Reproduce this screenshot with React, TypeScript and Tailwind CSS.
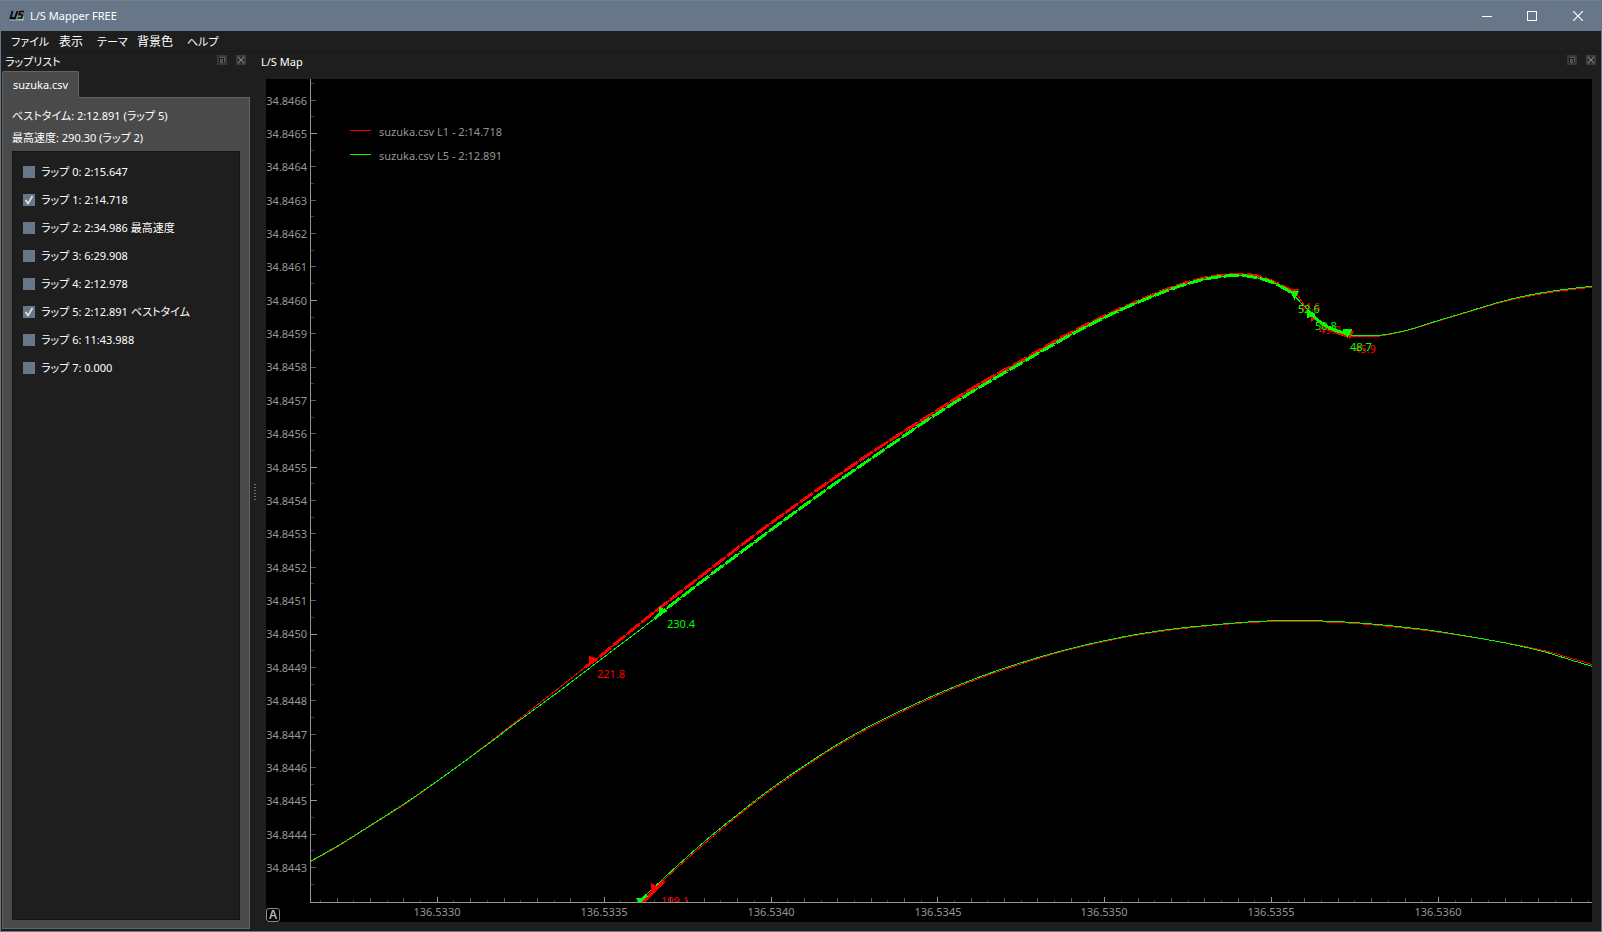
import { useState } from 'react';

type Point = [number, number];

const menuItems = [
  { label: 'ファイル', className: 'w-12 text-[11px]' },
  { label: '表示', className: 'w-[38px] text-[12px]' },
  { label: 'テーマ', className: 'w-10 text-[11px]' },
  { label: '背景色', className: 'w-[50px] text-[12px]' },
  { label: 'ヘルプ', className: 'w-12 text-[11px]' },
];

const laps = [
  { id: 0, time: '2:15.647', note: '' },
  { id: 1, time: '2:14.718', note: '' },
  { id: 2, time: '2:34.986', note: '最高速度' },
  { id: 3, time: '6:29.908', note: '' },
  { id: 4, time: '2:12.978', note: '' },
  { id: 5, time: '2:12.891', note: 'ベストタイム' },
  { id: 6, time: '11:43.988', note: '' },
  { id: 7, time: '0.000', note: '' },
];

const RED = '#ff0000';
const GREEN = '#00ff00';

// plot geometry
const AXIS_X = 310.5;
const AXIS_Y = 902.5;
const RIGHT = 1592;
const STEP = 16.685;

const redEntry: Point[] = [
  [310, 862], [337, 847], [360, 832.5], [405, 804], [438, 780.7], [480, 749.5],
  [520, 718.5], [557, 689.5], [585, 667.3],
];
const redBraking: Point[] = [
  [585, 667.3], [600, 656.3], [626.7, 634.3], [660, 607.7], [709, 570], [753, 536.3],
  [797, 504.3], [841, 473.3], [885, 443.7], [930, 415], [975, 386.7], [1022.5, 360],
  [1069.5, 333.3], [1117.6, 310], [1166.8, 289.3], [1200, 279], [1218.6, 275.7],
  [1235, 274.6], [1253.3, 275.2], [1270.7, 280.7], [1288, 288.7], [1296, 292.5],
];
const redExit: Point[] = [
  [1296, 292.5], [1304, 305], [1313, 316], [1320, 322], [1333, 331], [1347, 336.3],
  [1362, 336.8], [1378, 336.3], [1406.7, 330.7], [1436.7, 321.5], [1466.7, 312.5],
  [1500, 302.7], [1528, 296.3], [1560, 291], [1592, 287.3],
];

const greenEntry: Point[] = [
  [310, 861.5], [337, 846.3], [360, 832], [405, 803.3], [438, 780.5], [480, 750],
  [520, 720], [561.7, 689.3], [610, 652.5], [654.3, 619],
];
const greenBraking: Point[] = [
  [654.3, 619], [667.4, 608], [709, 576], [753, 543.3], [797, 510.7], [841, 479.3],
  [885, 449], [930, 418.3], [975, 390], [1022.5, 362.3], [1069.5, 335.5], [1117.6, 311.3],
  [1166.8, 290.7], [1200, 280.3], [1220, 276.7], [1238, 275.4], [1253.3, 277],
  [1270.7, 281.7], [1286.7, 289.7], [1294, 295],
];
const greenExit: Point[] = [
  [1294, 295], [1302, 304], [1310, 312], [1318, 320], [1333, 328.7], [1347, 334],
  [1356, 335.5], [1378, 335.5], [1406.7, 330.3], [1436.7, 321], [1466.7, 312],
  [1500, 302], [1528, 295.3], [1560, 290], [1592, 286.3],
];

const greenReturn: Point[] = [
  [637, 903], [656.6, 885], [677, 866], [706.6, 839.7], [737, 815], [771, 788.7],
  [808, 763.3], [837, 744.7], [871, 725.5], [917.4, 703], [962, 683.7], [1010, 666.3],
  [1065, 650], [1121, 637.3], [1172.7, 629], [1220, 624.3], [1260, 621.3], [1300, 620.5],
  [1335, 621.5], [1369, 623.7], [1430, 630.3], [1491, 640.3], [1520, 646], [1546.7, 652.5],
  [1570, 659.7], [1592, 666.3],
];
const redReturn: Point[] = [
  [640, 904], [658, 885.7], [678, 867], [707, 841.5], [737, 816.5], [771, 790.3],
  [808, 764.8], [837, 746], [871, 727], [917.4, 704.5], [962, 685], [1010, 667.5],
  [1065, 650.8], [1121, 638], [1172.7, 629.8], [1220, 624.8], [1260, 622], [1300, 621.5],
  [1335, 622.3], [1369, 624.5], [1430, 631], [1491, 640.3], [1520, 645.5], [1546.7, 651.3],
  [1570, 658], [1592, 664.5],
];

// Catmull-Rom through the GPS points
function smooth(points: Point[]) {
  let d = `M${points[0][0]} ${points[0][1]}`;
  for (let i = 0; i < points.length - 1; i++) {
    const p0 = points[i - 1] ?? points[i];
    const p1 = points[i];
    const p2 = points[i + 1];
    const p3 = points[i + 2] ?? p2;
    const c1 = [p1[0] + (p2[0] - p0[0]) / 6, p1[1] + (p2[1] - p0[1]) / 6];
    const c2 = [p2[0] - (p3[0] - p1[0]) / 6, p2[1] - (p3[1] - p1[1]) / 6];
    d += `C${c1[0]} ${c1[1]} ${c2[0]} ${c2[1]} ${p2[0]} ${p2[1]}`;
  }
  return d;
}

function Trace({ points, color, braking }: { points: Point[]; color: string; braking?: boolean }) {
  const d = smooth(points);
  return (
    <g fill="none" stroke={color} shapeRendering="crispEdges">
      <path d={d} />
      {braking && <path d={d} strokeWidth={3} strokeDasharray="15 3.1" />}
    </g>
  );
}

function SpeedLabel({ x, y, color, children }: { x: number; y: number; color: string; children: string }) {
  return (
    <text x={x} y={y} fill={color}>
      {children}
    </text>
  );
}

function tickStyle(k: number) {
  if (k % 10 === 0) return { length: 6, stroke: '#969696' };
  if (k % 2 === 0) return { length: 5, stroke: '#5a5a5a' };
  return { length: 3, stroke: '#3c3c3c' };
}

function Axes() {
  const yTicks = Array.from({ length: 49 }, (_, i) => i - 3);
  const xTicks = Array.from({ length: 77 }, (_, i) => i - 7);
  return (
    <g>
      <g shapeRendering="crispEdges">
        {yTicks.map((k) => {
          const y = 133.5 + k * STEP;
          const { length, stroke } = tickStyle(k);
          return y < AXIS_Y - 5 ? (
            <path key={k} d={`M${AXIS_X} ${Math.floor(y) + 0.5}h${length}`} stroke={stroke} />
          ) : null;
        })}
        {xTicks.map((k) => {
          const x = Math.floor(437.3 + k * STEP) + 0.5;
          const { length, stroke } = tickStyle(k);
          return <path key={k} d={`M${x} ${AXIS_Y}v${-length}`} stroke={stroke} />;
        })}
        <path d={`M${AXIS_X} 79V${AXIS_Y}H${RIGHT}`} fill="none" stroke="#969696" />
      </g>
      <g fill="#969696">
        {Array.from({ length: 24 }, (_, i) => (
          <text key={i} x={307} y={Math.round(104.5 + i * STEP * 2)} textAnchor="end">
            {(34.8466 - i * 0.0001).toFixed(4)}
          </text>
        ))}
        {Array.from({ length: 7 }, (_, i) => (
          <text key={i} x={Math.round(437 + i * STEP * 10)} y={916} textAnchor="middle">
            {(136.533 + i * 0.0005).toFixed(4)}
          </text>
        ))}
      </g>
    </g>
  );
}

function LapMap() {
  return (
    <svg
      viewBox="266 79 1326 843"
      className="block size-full font-['Noto_Sans'] text-[11px]"
      role="img"
      aria-label="L/S Map"
    >
      <defs>
        <clipPath id="plot">
          <rect x={310} y={79} width={1282} height={823} />
        </clipPath>
      </defs>
      <Axes />
      <g clipPath="url(#plot)">
        <Trace points={redEntry} color={RED} />
        <Trace points={redBraking} color={RED} braking />
        <Trace points={redExit} color={RED} />
        <Trace points={redReturn} color={RED} />

        <Trace points={greenEntry} color={GREEN} />
        <Trace points={greenReturn} color={GREEN} />
        <g fill={RED} shapeRendering="crispEdges">
          <path d="M589 655.500l9 4-9 5zM1289 289h10l-5 8zM1311 314l6 4-6 4zM1345 331h9l-4 8.500zM651 883l9.500 4.500-9.500 5z" />
          <path d="M1314 317Q1328 331 1347 336M664 881L642 903" fill="none" stroke={RED} strokeWidth={3} />
        </g>
        <SpeedLabel x={597} y={678} color={RED}>221.8</SpeedLabel>
        <SpeedLabel x={1298} y={311} color={RED}>44.6</SpeedLabel>
        <SpeedLabel x={1319} y={334} color={RED}>49.2</SpeedLabel>
        <SpeedLabel x={1354} y={353} color={RED}>45.9</SpeedLabel>
        <SpeedLabel x={661} y={905} color={RED}>199.1</SpeedLabel>

        <Trace points={greenBraking} color={GREEN} braking />
        <Trace points={greenExit} color={GREEN} />
        <g fill={GREEN} shapeRendering="crispEdges">
          <path d="M659 606.500l9 4.500-9 4.500zM1290 291h9l-4.500 9zM1307 309l9 5-9 4.500zM1342.500 329h10l-5 9zM635 897.500h9l-4.500 5z" />
          <path d="M1311 314Q1325 329 1346 333.500M647 895L637 904" fill="none" stroke={GREEN} strokeWidth={3} />
        </g>
        <SpeedLabel x={667} y={628} color={GREEN}>230.4</SpeedLabel>
        <SpeedLabel x={1298} y={313} color={GREEN}>52.6</SpeedLabel>
        <SpeedLabel x={1315} y={330} color={GREEN}>50.8</SpeedLabel>
        <SpeedLabel x={1350} y={351} color={GREEN}>48.7</SpeedLabel>
      </g>
      <g shapeRendering="crispEdges">
        <path d="M350 130.500h21" stroke={RED} />
        <path d="M350 154.500h21" stroke={GREEN} />
      </g>
      <g fill="#969696">
        <text x={379} y={136}>suzuka.csv L1 - 2:14.718</text>
        <text x={379} y={160}>suzuka.csv L5 - 2:12.891</text>
      </g>
    </svg>
  );
}

function AppLogo() {
  return (
    <svg width="16" height="12" viewBox="0 0 16 12" aria-hidden="true">
      <path d="M8 6h7v5H7z" fill="#7fa08c" />
      <path d="M3.500 1L1.500 8H5.500M8.500 1L5.500 9" stroke="#0a0a0a" strokeWidth="1.800" fill="none" />
      <path d="M15 1.500h-4l-1 3h3.500l-1 3.500H8.500" stroke="#0a0a0a" strokeWidth="1.600" fill="none" />
      <path d="M0 10.500h7" stroke="#8a96a5" />
      <path d="M9.500 9.500h5" stroke="#a8c4b0" />
      <path d="M13 4.500h1.500" stroke="#b04040" />
    </svg>
  );
}

function TitleBar() {
  return (
    <header className="flex h-[31px] shrink-0 items-center border-t border-[#73828f] bg-[#68768a] pl-[8px]">
      <AppLogo />
      <h1 className="ml-[5px] flex-1">L/S Mapper FREE</h1>
      <button className="grid h-full w-[45px] place-items-center" aria-label="最小化">
        <svg width="10" height="10" stroke="#fff" shapeRendering="crispEdges">
          <path d="M0 5.500h10" />
        </svg>
      </button>
      <button className="grid h-full w-[45px] place-items-center" aria-label="最大化">
        <svg width="10" height="10" stroke="#fff" fill="none" shapeRendering="crispEdges">
          <path d="M.5.5h9v9h-9z" />
        </svg>
      </button>
      <button className="grid h-full w-[47px] place-items-center" aria-label="閉じる">
        <svg width="10" height="10" stroke="#fff" strokeWidth="1.200">
          <path d="M0 0l10 10M10 0L0 10" />
        </svg>
      </button>
    </header>
  );
}

function DockHeader({ title, className }: { title: string; className: string }) {
  return (
    <div className={`flex shrink-0 ${className}`}>
      <h2 className="flex-1 leading-[20px]">{title}</h2>
      <div className="flex gap-[9px] pt-[3px]">
        <button className="size-[10px]" aria-label="フロート">
          <svg width="10" height="10" fill="none" shapeRendering="crispEdges">
            <rect width="10" height="10" rx="1" fill="#383838" />
            <path d="M2.500 3.500h4v4h-4z" stroke="#181818" />
            <path d="M3 2.500h4.500V7M3.500 7V4.500h2V7z" stroke="#5e5e5e" />
          </svg>
        </button>
        <button className="size-[10px]" aria-label="パネルを閉じる">
          <svg width="10" height="10">
            <rect width="10" height="10" rx="1" fill="#3c3c3c" />
            <rect x="2" y="2" width="6" height="6" fill="#222" />
            <path d="M2 2l6 6M8 2L2 8" stroke="#7a7a7a" strokeWidth="1.300" />
          </svg>
        </button>
      </div>
    </div>
  );
}

function LapList() {
  const [checked, setChecked] = useState<number[]>([1, 5]);
  const toggle = (id: number) =>
    setChecked((prev) => (prev.includes(id) ? prev.filter((x) => x !== id) : [...prev, id]));

  return (
    <ul className="flex-1 border border-[#141414] bg-[#1e1e1e] pt-[6px] pl-[10px]">
      {laps.map((lap) => (
        <li key={lap.id} className="h-7">
          <label className="flex h-full items-center gap-[6px]">
            <span className="grid size-3">
              <input
                type="checkbox"
                checked={checked.includes(lap.id)}
                onChange={() => toggle(lap.id)}
                className="peer col-start-1 row-start-1 size-3 appearance-none bg-[#68768a]"
              />
              <svg
                viewBox="0 0 12 12"
                className="pointer-events-none invisible col-start-1 row-start-1 size-3 peer-checked:visible"
              >
                <path d="M2.500 6l2.500 3.500L9.500 2" fill="none" stroke="#e4e4e4" strokeWidth="1.600" />
              </svg>
            </span>
            <span>
              ラップ {lap.id}: {lap.time} {lap.note}
            </span>
          </label>
        </li>
      ))}
    </ul>
  );
}

function LapPanel() {
  return (
    <aside className="flex w-[249px] shrink-0 flex-col pl-px">
      <DockHeader title="ラップリスト" className="h-[19px] pr-1 pl-[3px]" />
      <div role="tablist" className="flex">
        <button
          role="tab"
          aria-selected="true"
          className="relative z-10 -mb-px h-[27px] rounded-t-[2px] border border-b-0 border-[#646464] bg-[#4a4a4a] px-[10px]"
        >
          suzuka.csv
        </button>
      </div>
      <div
        role="tabpanel"
        className="flex flex-1 flex-col border border-[#646464] bg-[#4a4a4a] px-[9px] pt-[7px] pb-[8px]"
      >
        <p className="leading-[22px]">ベストタイム: 2:12.891 (ラップ 5)</p>
        <p className="mb-[2px] leading-[22px]">最高速度: 290.30 (ラップ 2)</p>
        <LapList />
      </div>
    </aside>
  );
}

function Splitter() {
  return (
    <div role="separator" className="grid w-[10px] shrink-0 place-items-center pt-[5px]">
      <svg width="2" height="18" shapeRendering="crispEdges">
        <path d="M1 0v18" stroke="#707070" strokeWidth="2" strokeDasharray="1 2" />
      </svg>
    </div>
  );
}

function MapPanel() {
  return (
    <main className="flex min-w-0 flex-1 flex-col">
      <DockHeader title="L/S Map" className="h-[27px] pr-[5px] pl-px" />
      <div className="relative mr-[9px] mb-[7px] ml-[6px] min-h-0 flex-1 bg-black">
        <LapMap />
        <button className="absolute bottom-0 left-0 grid size-[14px] place-items-center rounded-[3px] border border-[#8c8c8c] font-['Liberation_Sans'] text-[12px] leading-none font-bold text-[#b4b4b4]">
          A
        </button>
      </div>
    </main>
  );
}

export default function App() {
  return (
    <div className="flex h-screen flex-col overflow-hidden border-x border-b border-[#68768a] bg-[#1e1e1e] font-['Noto_Sans','Noto_Sans_CJK_JP',sans-serif] text-[11px] text-white [font-feature-settings:'palt']">
      <TitleBar />
      <nav className="flex h-[21px] shrink-0 border-b border-[#191919] pt-[2px] pl-[10px]">
        {menuItems.map((item) => (
          <button key={item.label} className={`text-left whitespace-nowrap ${item.className}`}>
            {item.label}
          </button>
        ))}
      </nav>
      <div className="flex min-h-0 flex-1 pb-[2px]">
        <LapPanel />
        <Splitter />
        <MapPanel />
      </div>
    </div>
  );
}
